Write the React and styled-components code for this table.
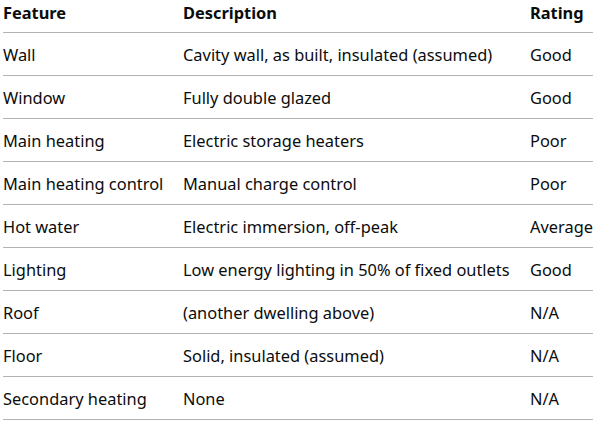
import styled, { createGlobalStyle } from "styled-components";

const GlobalStyle = createGlobalStyle`
  html, body {
    margin: 0;
    padding: 0;
    background: #ffffff;
  }
  body {
    font-family: "Noto Sans", "Liberation Sans", Arial, sans-serif;
    color: #0b0c0c;
  }
`

// STYLED COMPONENTS
const Page = styled.div`
  padding: 0 7px 0 3px;
`

const Table = styled.table`
  width: 590px;
  border-collapse: collapse;
  border-spacing: 0;
  table-layout: fixed;
  font-size: 16.4px;
  line-height: 20px;
`

const HeadCell = styled.th`
  text-align: left;
  font-weight: 700;
  padding: 3px 20px 9px 0;
  border-bottom: 1px solid #b1b4b6;
  width: ${(props) => props.$width}px;
  &:last-child {
    padding-right: 0;
  }
`

const Cell = styled.td`
  text-align: left;
  font-weight: 400;
  padding: 12px 20px 10px 0;
  border-bottom: 1px solid #b1b4b6;
  white-space: nowrap;
  &:last-child {
    padding-right: 0;
  }
`

const rows = [
  { feature: "Wall", description: "Cavity wall, as built, insulated (assumed)", rating: "Good" },
  { feature: "Window", description: "Fully double glazed", rating: "Good" },
  { feature: "Main heating", description: "Electric storage heaters", rating: "Poor" },
  { feature: "Main heating control", description: "Manual charge control", rating: "Poor" },
  { feature: "Hot water", description: "Electric immersion, off-peak", rating: "Average" },
  { feature: "Lighting", description: "Low energy lighting in 50% of fixed outlets", rating: "Good" },
  { feature: "Roof", description: "(another dwelling above)", rating: "N/A" },
  { feature: "Floor", description: "Solid, insulated (assumed)", rating: "N/A" },
  { feature: "Secondary heating", description: "None", rating: "N/A" },
]

export default function App() {
  return (
    <Page>
      <GlobalStyle />
      <Table>
        <thead>
          <tr>
            <HeadCell $width={160}>Feature</HeadCell>
            <HeadCell $width={327}>Description</HeadCell>
            <HeadCell $width={63}>Rating</HeadCell>
          </tr>
        </thead>
        <tbody>
          {rows.map((row) => (
            <tr key={row.feature}>
              <Cell>{row.feature}</Cell>
              <Cell>{row.description}</Cell>
              <Cell>{row.rating}</Cell>
            </tr>
          ))}
        </tbody>
      </Table>
    </Page>
  )
}
